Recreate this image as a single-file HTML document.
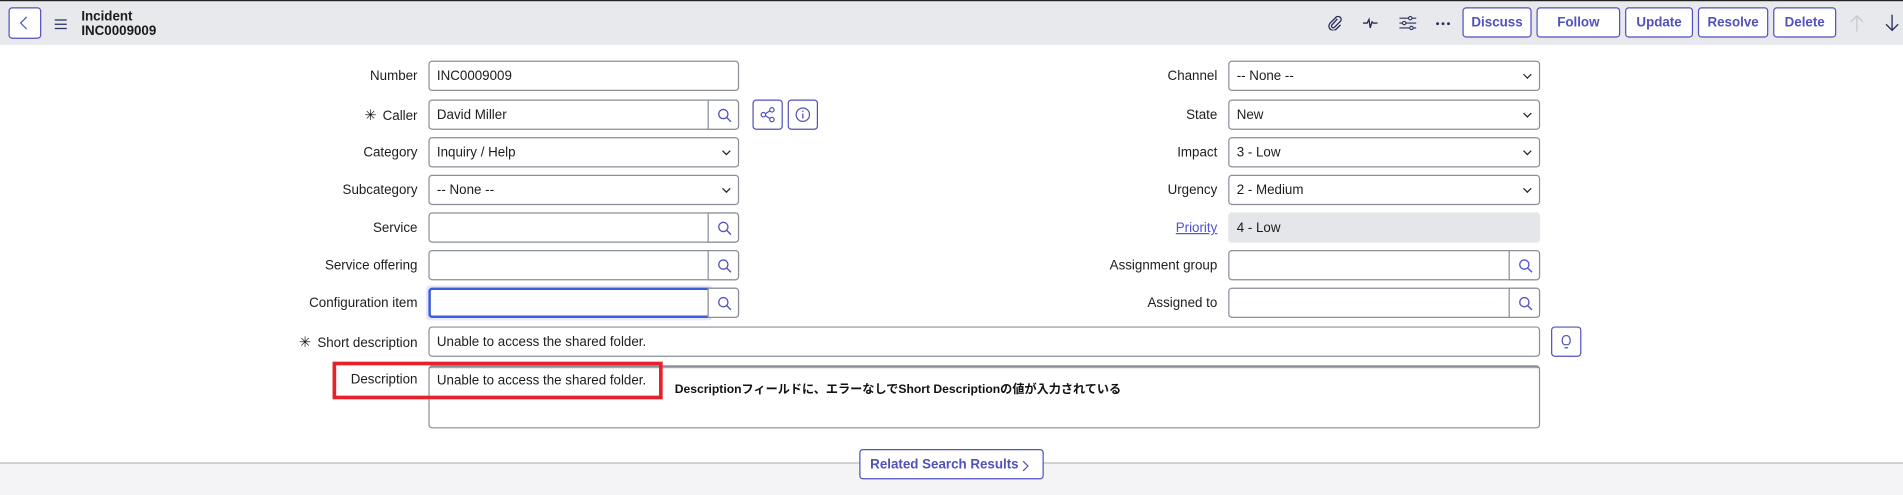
<!DOCTYPE html>
<html><head><meta charset="utf-8"><style>
*{box-sizing:border-box;margin:0;padding:0}
html,body{width:1903px;height:495px;overflow:hidden;background:#fff}
#w{position:absolute;left:0;top:0;width:1568px;height:408px;transform:scale(1.21365);transform-origin:0 0;font-family:"Liberation Sans","Noto Sans CJK JP",sans-serif;font-size:11px;color:#1d1d1d}
.a{position:absolute}
.hdr{left:0;top:0;width:1568px;height:37px;background:#e8e9ed;border-top:1px solid #222}
.btn{position:absolute;top:6px;height:25px;border:1px solid #4f52bd;border-radius:3px;background:#fff;color:#4f52bd;font-weight:bold;font-size:11px;text-align:center;line-height:25px}
.lbl{position:absolute;text-align:right;height:25px;line-height:27px;white-space:nowrap}
.in{position:absolute;height:25px;border:1px solid #8a8f98;border-radius:3px;background:#fff;line-height:25px;padding-left:6px;white-space:nowrap}
.sel:after{content:"";position:absolute;right:7px;top:8px;width:4px;height:4px;border-right:1.5px solid #222;border-bottom:1.5px solid #222;transform:rotate(45deg)}
.sb{position:absolute;top:-1px;right:-1px;width:26px;height:25px;border:1px solid #8a8f98;border-radius:0 3px 3px 0;background:#fff}
.sb svg{position:absolute;left:7px;top:6px}
.ib svg{position:absolute;left:5px;top:5px}
.ib{position:absolute;width:25px;height:25px;border:1px solid #4f52bd;border-radius:3px;background:#fff}
.ast{font-size:12px;margin-right:5px}
</style></head><body><div id="w">
<div class="a hdr"></div>
<div class="a" style="left:7px;top:6px;width:27px;height:26px;border:1px solid #4f52bd;border-radius:3px;background:#fff"><svg width="25" height="24"><path d="M14 7l-5 5 5 5" fill="none" stroke="#4f52bd" stroke-width="1"/></svg></div>
<svg class="a" style="left:45px;top:15px" width="11" height="10"><path d="M0 1.5h10M0 5h10M0 8.5h10" stroke="#2a2e5c" stroke-width="1"/></svg>
<div class="a" style="left:67px;top:8px;font-weight:bold;font-size:11px;line-height:12px;color:#1b1b1b">Incident<br>INC0009009</div>
<svg class="a" style="left:1094px;top:13px" width="12" height="12"><path d="M8 2.5L3.5 7.5a1.4 1.4 0 0 0 2 2l5-5a2.5 2.5 0 0 0-3.5-3.5L2 6a3.5 3.5 0 0 0 5 5l3.5-3.5" fill="none" stroke="#2a2e5c" stroke-width="1.1"/></svg>
<svg class="a" style="left:1123px;top:13px" width="12" height="12"><path d="M0 6h3.5l1.5-3 1 7 1.5-5 1 1h3.5" fill="none" stroke="#2a2e5c" stroke-width="1.1"/></svg>
<svg class="a" style="left:1153px;top:13px" width="14" height="12"><path d="M0 2h14M0 6h14M0 10h14" stroke="#2a2e5c" stroke-width="0.9"/><circle cx="9" cy="2" r="1.4" fill="#e8e9ed" stroke="#2a2e5c" stroke-width=".9"/><circle cx="4" cy="6" r="1.4" fill="#e8e9ed" stroke="#2a2e5c" stroke-width=".9"/><circle cx="10" cy="10" r="1.4" fill="#e8e9ed" stroke="#2a2e5c" stroke-width=".9"/></svg>
<svg class="a" style="left:1183px;top:18px" width="12" height="3"><circle cx="1.5" cy="1.5" r="1.2" fill="#2a2e5c"/><circle cx="6" cy="1.5" r="1.2" fill="#2a2e5c"/><circle cx="10.5" cy="1.5" r="1.2" fill="#2a2e5c"/></svg>
<div class="btn" style="left:1205px;width:57px">Discuss</div>
<div class="btn" style="left:1266px;width:69px">Follow</div>
<div class="btn" style="left:1339px;width:56px">Update</div>
<div class="btn" style="left:1399px;width:58px">Resolve</div>
<div class="btn" style="left:1461px;width:52px">Delete</div>
<svg class="a" style="left:1524px;top:12px" width="12" height="14"><path d="M6 1v13M1 6l5-5 5 5" fill="none" stroke="#c8cad3" stroke-width="1.1"/></svg>
<svg class="a" style="left:1553px;top:12px" width="12" height="14"><path d="M6 0v13M1 8l5 5 5-5" fill="none" stroke="#2a2e5c" stroke-width="1.1"/></svg>

<!-- left column -->
<div class="lbl" style="left:200px;width:144px;top:50px">Number</div>
<div class="in" style="left:353px;top:50px;width:256px">INC0009009</div>
<div class="lbl" style="left:200px;width:144px;top:82px"><span class="ast">✳</span>Caller</div>
<div class="in" style="left:353px;top:82px;width:256px">David Miller<div class="sb"><svg width="12" height="12"><circle cx="5" cy="5" r="3.8" fill="none" stroke="#4f52bd" stroke-width="1.1"/><path d="M7.8 7.8l3.5 3.5" stroke="#4f52bd" stroke-width="1.1"/></svg></div></div>
<div class="ib" style="left:620px;top:82px"><svg width="13" height="13"><circle cx="3" cy="6.5" r="1.8" fill="none" stroke="#4f52bd"/><circle cx="10" cy="2.5" r="1.8" fill="none" stroke="#4f52bd"/><circle cx="10" cy="10.5" r="1.8" fill="none" stroke="#4f52bd"/><path d="M4.6 5.7l3.8-2.4M4.6 7.3l3.8 2.4" stroke="#4f52bd"/></svg></div>
<div class="ib" style="left:649px;top:82px"><svg width="13" height="13"><circle cx="6.5" cy="6.5" r="5.5" fill="none" stroke="#4f52bd"/><path d="M6.5 5.5v4M6.5 3.2v1" stroke="#4f52bd" stroke-width="1.1"/></svg></div>
<div class="lbl" style="left:200px;width:144px;top:113px">Category</div>
<div class="in sel" style="left:353px;top:113px;width:256px">Inquiry / Help</div>
<div class="lbl" style="left:200px;width:144px;top:144px">Subcategory</div>
<div class="in sel" style="left:353px;top:144px;width:256px">-- None --</div>
<div class="lbl" style="left:200px;width:144px;top:175px">Service</div>
<div class="in" style="left:353px;top:175px;width:256px"><div class="sb"><svg width="12" height="12"><circle cx="5" cy="5" r="3.8" fill="none" stroke="#4f52bd" stroke-width="1.1"/><path d="M7.8 7.8l3.5 3.5" stroke="#4f52bd" stroke-width="1.1"/></svg></div></div>
<div class="lbl" style="left:200px;width:144px;top:206px">Service offering</div>
<div class="in" style="left:353px;top:206px;width:256px"><div class="sb"><svg width="12" height="12"><circle cx="5" cy="5" r="3.8" fill="none" stroke="#4f52bd" stroke-width="1.1"/><path d="M7.8 7.8l3.5 3.5" stroke="#4f52bd" stroke-width="1.1"/></svg></div></div>
<div class="lbl" style="left:200px;width:144px;top:237px">Configuration item</div>
<div class="a" style="left:351px;top:235px;width:236px;height:29px;background:#e6e8fb;border-radius:3px"></div>
<div class="in" style="left:353px;top:237px;width:256px;border-color:#8a8f98"><div class="a" style="left:-1px;top:-1px;width:232px;height:25px;border:2px solid #3c5de0;border-radius:3px 0 0 3px;background:#fff"></div><div class="sb"><svg width="12" height="12"><circle cx="5" cy="5" r="3.8" fill="none" stroke="#4f52bd" stroke-width="1.1"/><path d="M7.8 7.8l3.5 3.5" stroke="#4f52bd" stroke-width="1.1"/></svg></div></div>
<div class="lbl" style="left:200px;width:144px;top:269px"><span class="ast">✳</span>Short description</div>
<div class="in" style="left:353px;top:269px;width:916px">Unable to access the shared folder.</div>
<div class="ib" style="left:1278px;top:269px"><svg width="13" height="13"><path d="M4.8 9C2.5 7.5 2.5 1.5 6.5 1.5S10.5 7.5 8.2 9zM5 11.5h3" fill="none" stroke="#4f52bd"/></svg></div>
<div class="lbl" style="left:200px;width:144px;top:300px">Description</div>
<div class="in" style="left:353px;top:301px;width:916px;height:52px;line-height:23px;border-top:2px solid #8a8f98;background:linear-gradient(#ececec 0,#ececec 1px,#fff 1px)">Unable to access the shared folder.</div>
<div class="a" style="left:274px;top:298px;width:272px;height:31px;border:3px solid #e8202a"></div>
<div class="a" style="left:556px;top:312px;font-weight:bold;font-size:10px;color:#111">Descriptionフィールドに、エラーなしでShort Descriptionの値が入力されている</div>

<!-- right column -->
<div class="lbl" style="left:850px;width:153px;top:50px">Channel</div>
<div class="in sel" style="left:1012px;top:50px;width:257px">-- None --</div>
<div class="lbl" style="left:850px;width:153px;top:82px">State</div>
<div class="in sel" style="left:1012px;top:82px;width:257px">New</div>
<div class="lbl" style="left:850px;width:153px;top:113px">Impact</div>
<div class="in sel" style="left:1012px;top:113px;width:257px">3 - Low</div>
<div class="lbl" style="left:850px;width:153px;top:144px">Urgency</div>
<div class="in sel" style="left:1012px;top:144px;width:257px">2 - Medium</div>
<div class="lbl" style="left:850px;width:153px;top:175px;color:#4f52d8;text-decoration:underline">Priority</div>
<div class="in" style="left:1012px;top:175px;width:257px;background:#e5e6e9;border-color:#e5e6e9">4 - Low</div>
<div class="lbl" style="left:850px;width:153px;top:206px">Assignment group</div>
<div class="in" style="left:1012px;top:206px;width:257px"><div class="sb"><svg width="12" height="12"><circle cx="5" cy="5" r="3.8" fill="none" stroke="#4f52bd" stroke-width="1.1"/><path d="M7.8 7.8l3.5 3.5" stroke="#4f52bd" stroke-width="1.1"/></svg></div></div>
<div class="lbl" style="left:850px;width:153px;top:237px">Assigned to</div>
<div class="in" style="left:1012px;top:237px;width:257px"><div class="sb"><svg width="12" height="12"><circle cx="5" cy="5" r="3.8" fill="none" stroke="#4f52bd" stroke-width="1.1"/><path d="M7.8 7.8l3.5 3.5" stroke="#4f52bd" stroke-width="1.1"/></svg></div></div>

<!-- bottom -->
<div class="a" style="left:0;top:381px;width:1568px;height:27px;background:#f4f4f6;border-top:1px solid #b5b8c0"></div>
<div class="a" style="left:708px;top:370px;width:152px;height:25px;border:1px solid #4f52bd;border-radius:3px;background:#fff;color:#4f52bd;font-weight:bold;line-height:25px;padding-left:8px">Related Search Results<svg style="position:absolute;right:11px;top:8px" width="6" height="10"><path d="M1 1l4 4-4 4" fill="none" stroke="#4f52bd"/></svg></div>
</div></body></html>
